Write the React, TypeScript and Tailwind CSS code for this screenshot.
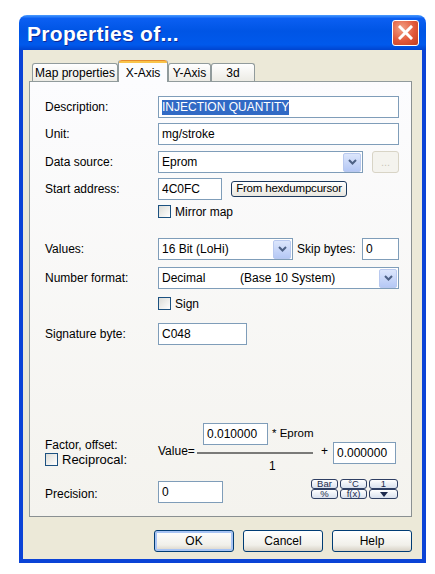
import React from "react";

const inputCls =
  "h-[22px] border border-[#7f9db9] bg-white pl-[3px] flex items-center text-[12px] text-black";

function Label({ children }: { children: React.ReactNode }) {
  return <div className="w-[113px] shrink-0 text-[12px] text-black">{children}</div>;
}

function Chevron() {
  return (
    <svg width="9" height="6" viewBox="0 0 9 6">
      <path d="M1 1 L4.5 4.5 L8 1" fill="none" stroke="#4d6185" strokeWidth="2" />
    </svg>
  );
}

function Combo({ width, children }: { width: string; children: React.ReactNode }) {
  return (
    <div className={`${inputCls} ${width} justify-between pr-px`}>
      <div className="flex items-center">{children}</div>
      <div className="w-[18px] h-[19px] rounded-[2px] border border-[#b9c9ef] bg-[linear-gradient(to_bottom,#dce6fc,#b5c8f5)] flex items-center justify-center">
        <Chevron />
      </div>
    </div>
  );
}

function Check({ label, big }: { label: string; big?: boolean }) {
  return (
    <div className="flex items-center h-[13px]">
      <div className="w-[13px] h-[13px] border border-[#1c5180] bg-[linear-gradient(135deg,#dcdcd7,#ffffff)]" />
      <span className={`ml-[4px] text-black ${big ? "text-[13px]" : "text-[12px]"}`}>{label}</span>
    </div>
  );
}

function XpButton({ children, focused }: { children: React.ReactNode; focused?: boolean }) {
  return (
    <button
      className={`w-[80px] h-[22px] rounded-[3px] border border-[#003c74] bg-[linear-gradient(to_bottom,#ffffff,#f1f0ea_70%,#d8d2c6)] text-[12px] text-black ${
        focused ? "shadow-[inset_0_0_0_2px_#a8c4f4]" : ""
      }`}
    >
      {children}
    </button>
  );
}

function MiniButton({ children }: { children: React.ReactNode }) {
  return (
    <div className="h-[10px] rounded-[3px] border border-[#2f3f63] bg-[linear-gradient(to_bottom,#ffffff,#d9e1ee)] flex items-center justify-center text-[9.5px] leading-[8px] text-[#1d2b4e] overflow-hidden">
      {children}
    </div>
  );
}

function Tab({ children, selected, width }: { children: React.ReactNode; selected?: boolean; width: string }) {
  if (selected) {
    return (
      <div
        className={`${width} h-[22px] -mb-px relative z-10 rounded-t-[3px] border-x border-[#919b9c] bg-[#fcfcfe] flex flex-col`}
      >
        <div className="h-[3px] rounded-t-[3px] bg-[#f9c44a] border-t border-[#e68b2c]" />
        <div className="flex-1 flex items-start justify-center pt-[1px] text-[12px] text-black">{children}</div>
      </div>
    );
  }
  return (
    <div
      className={`${width} h-[18px] rounded-t-[3px] border-x border-t border-[#919b9c] bg-[linear-gradient(to_bottom,#ffffff,#ecebe5)] flex items-center justify-center text-[12px] text-black`}
    >
      {children}
    </div>
  );
}

export default function App() {
  return (
    <div
      className="w-[435px] h-[574px] bg-white pt-[15px] pl-[19px] whitespace-nowrap"
      style={{ fontFamily: '"Liberation Sans", Arial, sans-serif' }}
    >
      <div className="w-[407px] h-[548px] flex flex-col rounded-t-[8px] overflow-hidden">
        {/* Title bar */}
        <div className="h-[35px] shrink-0 flex items-center justify-between pl-[8px] pr-[7px] bg-[linear-gradient(to_bottom,#4a9cff_0%,#0b5ff2_10%,#0055e5_45%,#0059ec_85%,#0044cf_100%)]">
          <span className="text-[21px] font-bold text-white pt-[3px] tracking-[0.3px] [text-shadow:1px_1px_0_#0f2a9a]">
            Properties of...
          </span>
          <div className="w-[27px] h-[26px] rounded-[3px] border border-white bg-[radial-gradient(circle_at_35%_30%,#f2a185,#e2583a_55%,#c13e1e)] flex items-center justify-center">
            <svg width="15" height="15" viewBox="0 0 15 15">
              <path d="M2 2 L13 13 M13 2 L2 13" stroke="#fff" strokeWidth="3" strokeLinecap="square" />
            </svg>
          </div>
        </div>

        {/* Body */}
        <div className="flex-1 bg-[#ece9d8] border-x-4 border-b-4 border-[#0b43d6] pt-[10px] pl-[6px] pr-[10px] pb-[7px] flex flex-col">
          {/* Tabs */}
          <div className="h-[21px] flex items-end pl-[3px]">
            <Tab width="w-[86px]">Map properties</Tab>
            <Tab width="w-[50px]" selected>
              X-Axis
            </Tab>
            <Tab width="w-[43px]">Y-Axis</Tab>
            <Tab width="w-[44px]">3d</Tab>
          </div>

          {/* Panel */}
          <div className="h-[436px] border border-[#919b9c] border-r-[#8a9092] border-b-[#8a9092] bg-[linear-gradient(to_bottom,#fcfcfe,#f4f3ee)] pt-[14px] pl-[15px] flex flex-col">
            <div className="flex items-center h-[22px]">
              <Label>Description:</Label>
              <div className={`${inputCls} w-[241px]`}>
                <span className="bg-[#316ac5] text-white leading-[15px]">INJECTION QUANTITY</span>
              </div>
            </div>
            <div className="flex items-center h-[22px] mt-[5px]">
              <Label>Unit:</Label>
              <div className={`${inputCls} w-[241px]`}>mg/stroke</div>
            </div>
            <div className="flex items-center h-[22px] mt-[6px]">
              <Label>Data source:</Label>
              <Combo width="w-[205px]">Eprom</Combo>
              <div className="ml-[9px] w-[27px] h-[22px] rounded-[3px] border border-[#d8d4c6] bg-[#f4f3ee] flex items-center justify-center text-[11px] text-[#c9c7ba]">
                ...
              </div>
            </div>
            <div className="flex items-center h-[22px] mt-[5px]">
              <Label>Start address:</Label>
              <div className={`${inputCls} w-[64px]`}>4C0FC</div>
              <div className="ml-[9px] w-[116px] h-[16px] rounded-[3px] border border-[#1d3a5e] bg-[linear-gradient(to_bottom,#ffffff,#e9e7e0)] flex items-center justify-center text-[11.5px] tracking-[-0.2px] text-black">
                From hexdumpcursor
              </div>
            </div>
            <div className="flex items-center mt-[5px] pl-[113px]">
              <Check label="Mirror map" />
            </div>

            <div className="flex items-center h-[22px] mt-[20px]">
              <Label>Values:</Label>
              <Combo width="w-[135px]">16 Bit (LoHi)</Combo>
              <span className="ml-[4px] w-[65px] text-[12px] text-black">Skip bytes:</span>
              <div className={`${inputCls} w-[37px]`}>0</div>
            </div>
            <div className="flex items-center h-[22px] mt-[7px]">
              <Label>Number format:</Label>
              <Combo width="w-[241px]">
                <span className="w-[78px]">Decimal</span>
                <span>(Base 10 System)</span>
              </Combo>
            </div>
            <div className="flex items-center mt-[8px] pl-[113px]">
              <Check label="Sign" />
            </div>
            <div className="flex items-center h-[22px] mt-[13px]">
              <Label>Signature byte:</Label>
              <div className={`${inputCls} w-[89px]`}>C048</div>
            </div>

            {/* Factor / offset */}
            <div className="flex h-[56px] mt-[78px]">
              <div className="w-[113px] shrink-0 pt-[15px]">
                <div className="text-[12px] leading-[14px] text-black">Factor, offset:</div>
                <div className="mt-[1px]">
                  <Check label="Reciprocal:" big />
                </div>
              </div>
              <div className="flex items-start">
                <span className="mt-[21px] w-[39px] text-[12px] leading-[14px] text-black">Value=</span>
                <div className="w-[116px] flex flex-col">
                  <div className="flex items-start pl-[6px]">
                    <div className={`${inputCls} w-[65px] h-[21px] shrink-0`}>0.010000</div>
                    <span className="ml-[4px] mt-[2px] text-[11.5px] text-black">* Eprom</span>
                  </div>
                  <div className="mt-[7px] h-[2px] bg-[#7a7a78]" />
                  <span className="mt-[5px] pl-[72px] text-[12px] leading-[14px] text-black">1</span>
                </div>
                <span className="mt-[21px] ml-[8px] text-[12px] leading-[14px] text-black">+</span>
                <div className={`${inputCls} w-[63px] h-[21px] mt-[19px] ml-[5px]`}>0.000000</div>
              </div>
            </div>

            <div className="flex items-start">
              <Label>
                <div className="mt-[6px]">Precision:</div>
              </Label>
              <div className={`${inputCls} w-[65px] h-[21px] mt-[2px]`}>0</div>
              <div className="ml-[88px] grid grid-cols-[27px_27px_29px] gap-x-[2px]">
                <MiniButton>Bar</MiniButton>
                <MiniButton>°C</MiniButton>
                <MiniButton>1</MiniButton>
                <MiniButton>%</MiniButton>
                <MiniButton>f(x)</MiniButton>
                <MiniButton>
                  <svg width="8" height="5" viewBox="0 0 8 5">
                    <polygon points="0,0 8,0 4,5" fill="#1d2b4e" />
                  </svg>
                </MiniButton>
              </div>
            </div>
          </div>

          {/* Buttons */}
          <div className="mt-[13px] flex justify-end gap-[9px]">
            <XpButton focused>OK</XpButton>
            <XpButton>Cancel</XpButton>
            <XpButton>Help</XpButton>
          </div>
        </div>
      </div>
    </div>
  );
}
